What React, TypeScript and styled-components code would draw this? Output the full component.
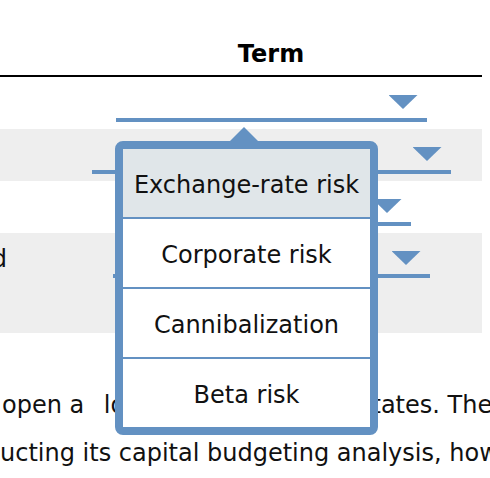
import React from "react";
import styled, { createGlobalStyle, css } from "styled-components";

const BLUE = "#6391c2";

const Global = createGlobalStyle`
  html, body {
    margin: 0;
    padding: 0;
    background: #ffffff;
    overflow: hidden;
  }
  body {
    width: 490px;
    height: 478px;
    font-family: "DejaVu Sans", Verdana, sans-serif;
    font-size: 24px;
    color: #111111;
  }
`;

const Page = styled.div`
  position: relative;
  width: 490px;
  height: 478px;
  overflow: hidden;
`;

const Table = styled.div`
  display: grid;
  grid-template-columns: 560px 422px;
  width: 982px;
  margin-left: -500px;
`;

const HeadCell = styled.div`
  padding: 40px 0 7px;
  line-height: 28px;
  font-weight: bold;
  text-align: center;
  color: #000000;
  border-bottom: 2px solid #000000;
`;

const Row = styled.div<{ $shade?: boolean; $tall?: boolean }>`
  display: contents;
  & > * {
    background: ${(p) => (p.$shade ? "#eeeeee" : "#ffffff")};
    height: ${(p) => (p.$tall ? "100px" : "52px")};
  }
`;

const LabelCell = styled.div`
  box-sizing: border-box;
  padding: 12px 10px 0;
  line-height: 28px;
  overflow: hidden;
  white-space: nowrap;
`;

const LabelLine = styled.div<{ $end?: boolean }>`
  ${(p) =>
    p.$end &&
    css`
      text-align: right;
      padding-right: 43px;
    `}
`;

const TermCell = styled.div`
  box-sizing: border-box;
  display: flex;
  justify-content: center;
  align-items: flex-start;
  padding-top: 14px;
`;

const Dropdown = styled.div`
  box-sizing: content-box;
  height: 27px;
  display: flex;
  justify-content: flex-end;
  align-items: flex-start;
  border-bottom: 4px solid ${BLUE};
`;

const Caret = styled.span`
  display: block;
  width: 29px;
  height: 14px;
  margin: 4px 9px 0 0;
  background: ${BLUE};
  clip-path: polygon(0 0, 100% 0, 50% 100%);
`;

const Paragraph = styled.div`
  padding-top: 48px;
  line-height: 48px;
  white-space: nowrap;
`;

const TextLine = styled.div<{ $indent?: number }>`
  padding-left: ${(p) => p.$indent ?? 0}px;
`;

const Popup = styled.div`
  position: absolute;
  z-index: 1;
  left: 115px;
  top: 141px;
  width: 263px;
  box-sizing: border-box;
  border: 8px solid ${BLUE};
  border-radius: 8px;
  background: #ffffff;
  display: flex;
  flex-direction: column;

  &::before {
    content: "";
    position: absolute;
    left: 107px;
    top: -22px;
    width: 28px;
    height: 14px;
    background: ${BLUE};
    clip-path: polygon(50% 0, 100% 100%, 0 100%);
  }
`;

const Option = styled.div<{ $active?: boolean }>`
  height: 68px;
  box-sizing: border-box;
  padding-top: 3px;
  display: flex;
  align-items: center;
  justify-content: center;
  line-height: 28px;
  color: #111111;
  background: ${(p) => (p.$active ? "#e0e6e9" : "#ffffff")};
  & + & {
    border-top: 2px solid ${BLUE};
    height: 70px;
  }
`;

type RowData = {
  label: string[];
  width: number;
  shade?: boolean;
  tall?: boolean;
};

const rows: RowData[] = [
  { label: [], width: 311 },
  { label: [], width: 359, shade: true },
  { label: [], width: 279 },
  {
    label: ["Can be diversified", "away"],
    width: 317,
    shade: true,
    tall: true,
  },
];

const options = [
  "Exchange-rate risk",
  "Corporate risk",
  "Cannibalization",
  "Beta risk",
];

export default function App() {
  return (
    <Page>
      <Global />
      <Table>
        <HeadCell />
        <HeadCell>Term</HeadCell>
        {rows.map((r, i) => (
          <Row key={i} $shade={r.shade} $tall={r.tall}>
            <LabelCell>
              {r.label.map((l, j) => (
                <LabelLine key={j} $end={r.tall && j === 0}>
                  {l}
                </LabelLine>
              ))}
            </LabelCell>
            <TermCell>
              <Dropdown style={{ width: r.width }}>
                <Caret />
              </Dropdown>
            </TermCell>
          </Row>
        ))}
      </Table>
      <Paragraph>
        <TextLine $indent={2}>
          {"open a \u2002lounge in the United States. The"}
        </TextLine>
        <TextLine>ucting its capital budgeting analysis, how</TextLine>
      </Paragraph>
      <Popup>
        {options.map((o, i) => (
          <Option key={o} $active={i === 0}>
            {o}
          </Option>
        ))}
      </Popup>
    </Page>
  );
}
